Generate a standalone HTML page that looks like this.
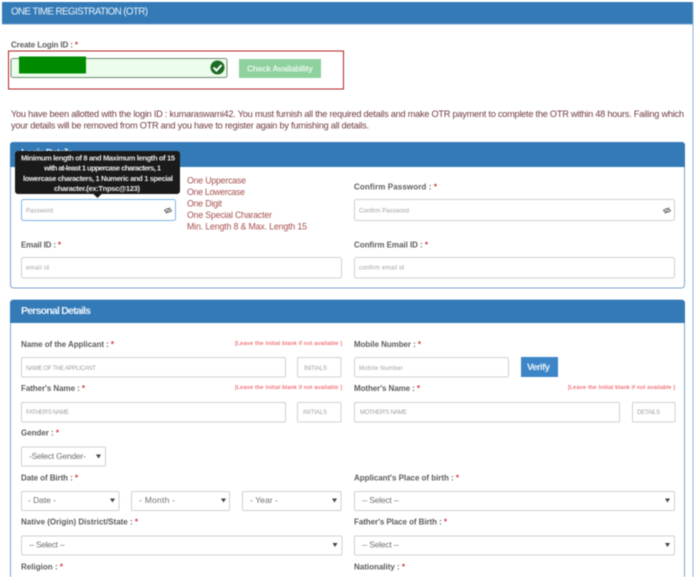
<!DOCTYPE html>
<html>
<head>
<meta charset="utf-8">
<style>
html,body{margin:0;padding:0;background:#fff;width:695px;height:577px;overflow:hidden}
svg{display:block;filter:blur(.45px)}
text{font-family:"Liberation Sans",sans-serif}
.l{font-size:8px;font-weight:bold;fill:#5c5c5c}
.l tspan{fill:#d9303a}
.p{font-size:6px;fill:#a0a0a0}
.s{font-size:8.5px;fill:#707070}
.h{font-size:8.8px;fill:#a5504f}
.m{font-size:9.2px;fill:#6f3a40}
.n{font-size:5.6px;fill:#e8323c}
.t{font-size:7.5px;font-weight:bold;fill:#e8e8e8}
.b{fill:#fff;stroke:#d0d0d0;stroke-width:1}
.a{fill:#444}
</style>
</head>
<body>
<svg width="695" height="577" viewBox="0 0 695 577" xmlns="http://www.w3.org/2000/svg">
<rect width="695" height="577" fill="#fff"/>
<!-- outer panel -->
<rect x="2" y="2" width="691" height="22" fill="#337ab7"/>
<rect x="2" y="23.500" width="691" height="1" fill="#6f9fd0"/>
<rect x="692.500" y="2" width="1" height="575" fill="#8fb0d0"/>
<text x="11" y="14.500" font-size="9.800" fill="#e9f1f8" textLength="137" lengthAdjust="spacing">ONE TIME REGISTRATION (OTR)</text>

<text class="l" x="11" y="47.500" textLength="67" lengthAdjust="spacing">Create Login ID : <tspan>*</tspan></text>
<rect x="8.500" y="51" width="335" height="38" fill="#fff" stroke="#b32024" stroke-width="1"/>
<rect x="11" y="58.500" width="216" height="19" rx="2" fill="#ecfdec" stroke="#6f8a6f" stroke-width="1"/>
<rect x="19" y="56.500" width="67" height="17" fill="#008a00"/>
<circle cx="217.500" cy="67.500" r="7" fill="#1c6a24"/>
<path d="M213.500 67.500l3 3 5-5.500" fill="none" stroke="#fff" stroke-width="2"/>
<rect x="239" y="59" width="82" height="19" fill="#8fd19e"/>
<text x="247" y="71.500" font-size="8.500" font-weight="bold" fill="#e8f6ea" textLength="66" lengthAdjust="spacing">Check Availability</text>

<text class="m" x="11" y="117" textLength="673" lengthAdjust="spacing">You have been allotted with the login ID : kumaraswami42. You must furnish all the required details and make OTR payment to complete the OTR within 48 hours. Failing which</text>
<text class="m" x="11" y="128.500" textLength="358" lengthAdjust="spacing">your details will be removed from OTR and you have to register again by furnishing all details.</text>

<!-- login panel -->
<rect x="10.500" y="142.500" width="674" height="145.500" rx="3" fill="#fff" stroke="#7ba6cf" stroke-width="1"/>
<path d="M10 167V145a3 3 0 0 1 3-3H682a3 3 0 0 1 3 3V167Z" fill="#337ab7"/>
<text x="21" y="156" font-size="10.500" font-weight="bold" fill="#e9f1f8" textLength="52" lengthAdjust="spacing">Login Details</text>

<rect x="21.500" y="199.500" width="154" height="21" rx="2" fill="#fff" stroke="#7fb4e3" stroke-width="1"/>
<text class="p" x="26" y="212.500" textLength="27" lengthAdjust="spacing">Password</text>
<g fill="none" stroke="#666" stroke-width="1"><path d="M164.500 210.500q3.500-3.500 7 0q-3.500 3.500-7 0z"/><path d="M166 213.500l4-6"/></g>

<rect x="15" y="151" width="165" height="43" rx="3" fill="#1a1a1a"/>
<path d="M93.500 194h8l-4 4z" fill="#1a1a1a"/>
<text class="t" x="21" y="160.500" textLength="154" lengthAdjust="spacing">Minimum length of 8 and Maximum length of 15</text>
<text class="t" x="44" y="170.500" textLength="117" lengthAdjust="spacing">with at-least 1 uppercase characters, 1</text>
<text class="t" x="23" y="181" textLength="150" lengthAdjust="spacing">lowercase characters, 1 Numeric and 1 special</text>
<text class="t" x="54" y="191" textLength="86" lengthAdjust="spacing">character.(ex:Tnpsc@123)</text>

<text class="h" x="187" y="183.500" textLength="59" lengthAdjust="spacing">One Uppercase</text>
<text class="h" x="187" y="195" textLength="58" lengthAdjust="spacing">One Lowercase</text>
<text class="h" x="187" y="206.500" textLength="35" lengthAdjust="spacing">One Digit</text>
<text class="h" x="187" y="218" textLength="85" lengthAdjust="spacing">One Special Character</text>
<text class="h" x="187" y="229.500" textLength="120" lengthAdjust="spacing">Min. Length 8 &amp; Max. Length 15</text>

<text class="l" x="354" y="189.500" textLength="83" lengthAdjust="spacing">Confirm Password : <tspan>*</tspan></text>
<rect class="b" x="354.500" y="199.500" width="320" height="21" rx="2"/>
<text class="p" x="359" y="212.500" textLength="50" lengthAdjust="spacing">Confirm Password</text>
<g fill="none" stroke="#666" stroke-width="1"><path d="M663.500 210.500q3.500-3.500 7 0q-3.500 3.500-7 0z"/><path d="M665 213.500l4-6"/></g>

<text class="l" x="21" y="247.500" textLength="40" lengthAdjust="spacing">Email ID : <tspan>*</tspan></text>
<rect class="b" x="21.500" y="257.500" width="320" height="20.500" rx="2"/>
<text class="p" x="26" y="269.500" textLength="23" lengthAdjust="spacing">email id</text>
<text class="l" x="354" y="247.500" textLength="74" lengthAdjust="spacing">Confirm Email ID : <tspan>*</tspan></text>
<rect class="b" x="354.500" y="257.500" width="320" height="20.500" rx="2"/>
<text class="p" x="359" y="269.500" textLength="45" lengthAdjust="spacing">confirm email id</text>

<!-- personal panel -->
<path d="M10.500 577V303a3 3 0 0 1 3-3H681.500a3 3 0 0 1 3 3V577" fill="#fff" stroke="#7ba6cf" stroke-width="1"/>
<path d="M10 323V303a3 3 0 0 1 3-3H682a3 3 0 0 1 3 3V323Z" fill="#337ab7"/>
<text x="21" y="314" font-size="10.500" font-weight="bold" fill="#e9f1f8" textLength="70" lengthAdjust="spacing">Personal Details</text>

<text class="l" x="21" y="347" textLength="93" lengthAdjust="spacing">Name of the Applicant : <tspan>*</tspan></text>
<text class="n" x="235" y="345" textLength="107" lengthAdjust="spacing">[Leave the Initial blank if not available ]</text>
<rect class="b" x="21.500" y="357.500" width="264" height="19.500" rx="1"/>
<text class="p" x="26" y="370" textLength="70" lengthAdjust="spacing">NAME OF THE APPLICANT</text>
<rect class="b" x="297.500" y="357.500" width="43.500" height="19.500" rx="1"/>
<text class="p" x="304" y="370" textLength="23" lengthAdjust="spacing">INITIALS</text>

<text class="l" x="354" y="347" textLength="67" lengthAdjust="spacing">Mobile Number : <tspan>*</tspan></text>
<rect class="b" x="354.500" y="357.500" width="154" height="19.500" rx="2"/>
<text class="p" x="359" y="370" textLength="44" lengthAdjust="spacing">Mobile Number</text>
<rect x="521" y="357" width="37" height="20" fill="#3c86c8"/>
<text x="527" y="370" font-size="9.500" font-weight="bold" fill="#e9f1f8" textLength="23" lengthAdjust="spacing">Verify</text>

<text class="l" x="21" y="391" textLength="64" lengthAdjust="spacing">Father's Name : <tspan>*</tspan></text>
<text class="n" x="235" y="389" textLength="107" lengthAdjust="spacing">[Leave the Initial blank if not available ]</text>
<rect class="b" x="21.500" y="402.500" width="264" height="19.500" rx="1"/>
<text class="p" x="26" y="414" textLength="43" lengthAdjust="spacing">FATHER'S NAME</text>
<rect class="b" x="297.500" y="402.500" width="43.500" height="19.500" rx="1"/>
<text class="p" x="303" y="414" textLength="24" lengthAdjust="spacing">INITIALS</text>

<text class="l" x="354" y="391" textLength="66" lengthAdjust="spacing">Mother's Name : <tspan>*</tspan></text>
<text class="n" x="568" y="389" textLength="107" lengthAdjust="spacing">[Leave the Initial blank if not available ]</text>
<rect class="b" x="354.500" y="402.500" width="265" height="19.500" rx="1"/>
<text class="p" x="360" y="414" textLength="47" lengthAdjust="spacing">MOTHER'S NAME</text>
<rect class="b" x="632.500" y="402.500" width="42.500" height="19.500" rx="1"/>
<text class="p" x="637" y="414" textLength="23" lengthAdjust="spacing">DETAILS</text>

<text class="l" x="21" y="435.500" textLength="38" lengthAdjust="spacing">Gender : <tspan>*</tspan></text>
<rect class="b" x="21.500" y="447" width="84" height="19" rx="1"/>
<text class="s" x="29" y="459" textLength="57" lengthAdjust="spacing">-Select Gender-</text>
<path class="a" d="M96 454.500h5l-2.500 4z"/>

<text class="l" x="21" y="480.500" textLength="57" lengthAdjust="spacing">Date of Birth : <tspan>*</tspan></text>
<rect class="b" x="21.500" y="491.500" width="97.500" height="19" rx="1"/>
<text class="s" x="28" y="503" textLength="28" lengthAdjust="spacing">- Date -</text>
<path class="a" d="M110 498.500h5l-2.500 4z"/>
<rect class="b" x="131.500" y="491.500" width="98" height="19" rx="1"/>
<text class="s" x="139" y="503" textLength="36" lengthAdjust="spacing">- Month -</text>
<path class="a" d="M221 498.500h5l-2.500 4z"/>
<rect class="b" x="242.500" y="491.500" width="98.500" height="19" rx="1"/>
<text class="s" x="250" y="503" textLength="28" lengthAdjust="spacing">- Year -</text>
<path class="a" d="M332 498.500h5l-2.500 4z"/>

<text class="l" x="354" y="480.500" textLength="105" lengthAdjust="spacing">Applicant's Place of birth : <tspan>*</tspan></text>
<rect class="b" x="354.500" y="491.500" width="320" height="19" rx="1"/>
<text class="s" x="362" y="503" textLength="37" lengthAdjust="spacing">-- Select --</text>
<path class="a" d="M665 498.500h5l-2.500 4z"/>

<text class="l" x="21" y="524.500" textLength="117" lengthAdjust="spacing">Native (Origin) District/State : <tspan>*</tspan></text>
<rect class="b" x="21.500" y="536" width="320.500" height="19" rx="1"/>
<text class="s" x="29" y="547.500" textLength="36" lengthAdjust="spacing">-- Select --</text>
<path class="a" d="M332.500 543h5l-2.500 4z"/>

<text class="l" x="354" y="524.500" textLength="93" lengthAdjust="spacing">Father's Place of Birth : <tspan>*</tspan></text>
<rect class="b" x="354.500" y="536" width="320" height="19" rx="1"/>
<text class="s" x="362" y="547.500" textLength="37" lengthAdjust="spacing">-- Select --</text>
<path class="a" d="M665 543h5l-2.500 4z"/>

<text class="l" x="21" y="569.500" textLength="42" lengthAdjust="spacing">Religion : <tspan>*</tspan></text>
<text class="l" x="354" y="569.500" textLength="51" lengthAdjust="spacing">Nationality : <tspan>*</tspan></text>
</svg>
</body>
</html>
